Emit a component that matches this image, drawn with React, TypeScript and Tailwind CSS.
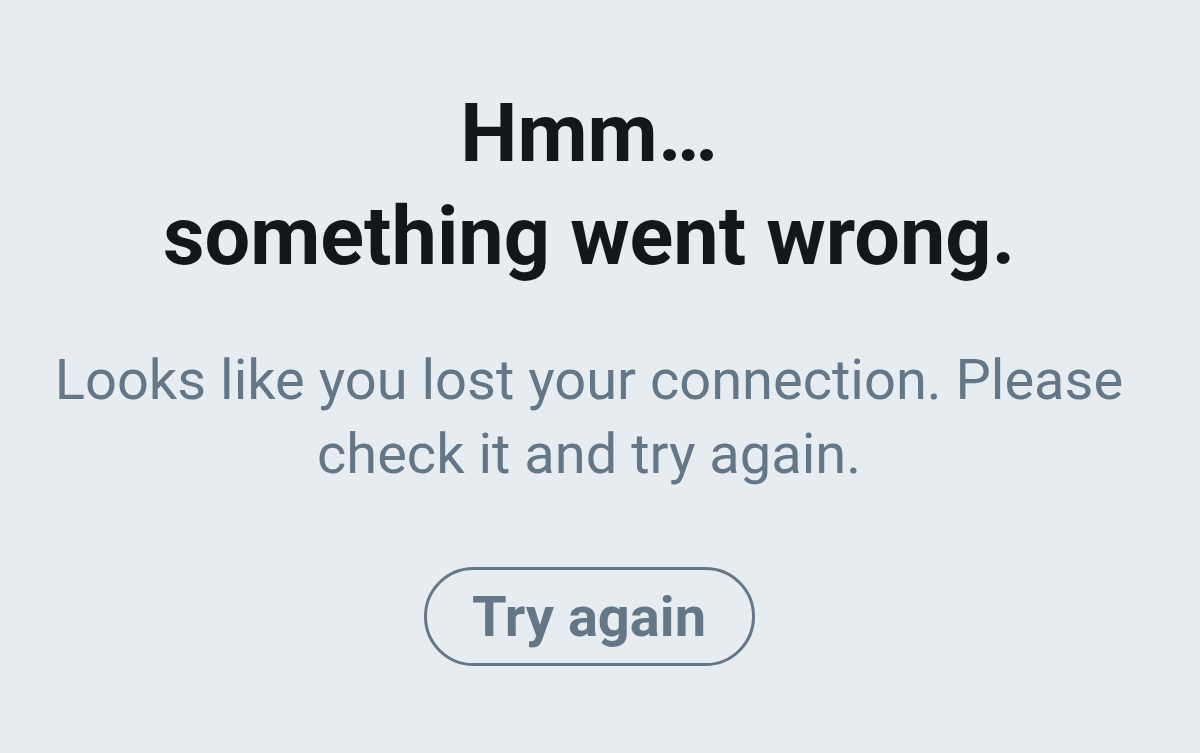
export default function App() {
  return (
    <div
      className="w-[1200px] h-[753px] bg-[#e6ecf0] flex flex-col items-center pt-[82px] pr-[22px] overflow-hidden"
      style={{ fontFamily: 'Roboto, "Noto Sans", sans-serif' }}
    >
      <h1 className="text-[81px] leading-[103px] font-bold text-[#14171a] text-center">
        Hmm…
        <br />
        something went wrong.
      </h1>
      <p className="mt-[55px] text-[56px] leading-[74px] text-[#657786] text-center whitespace-nowrap">
        Looks like you lost your connection. Please
        <br />
        check it and try again.
      </p>
      <button className="mt-[76px] h-[99px] w-[331px] rounded-full border-[3px] border-[#657786] text-[56px] font-bold text-[#657786] flex items-center justify-center">
        Try again
      </button>
    </div>
  );
}
